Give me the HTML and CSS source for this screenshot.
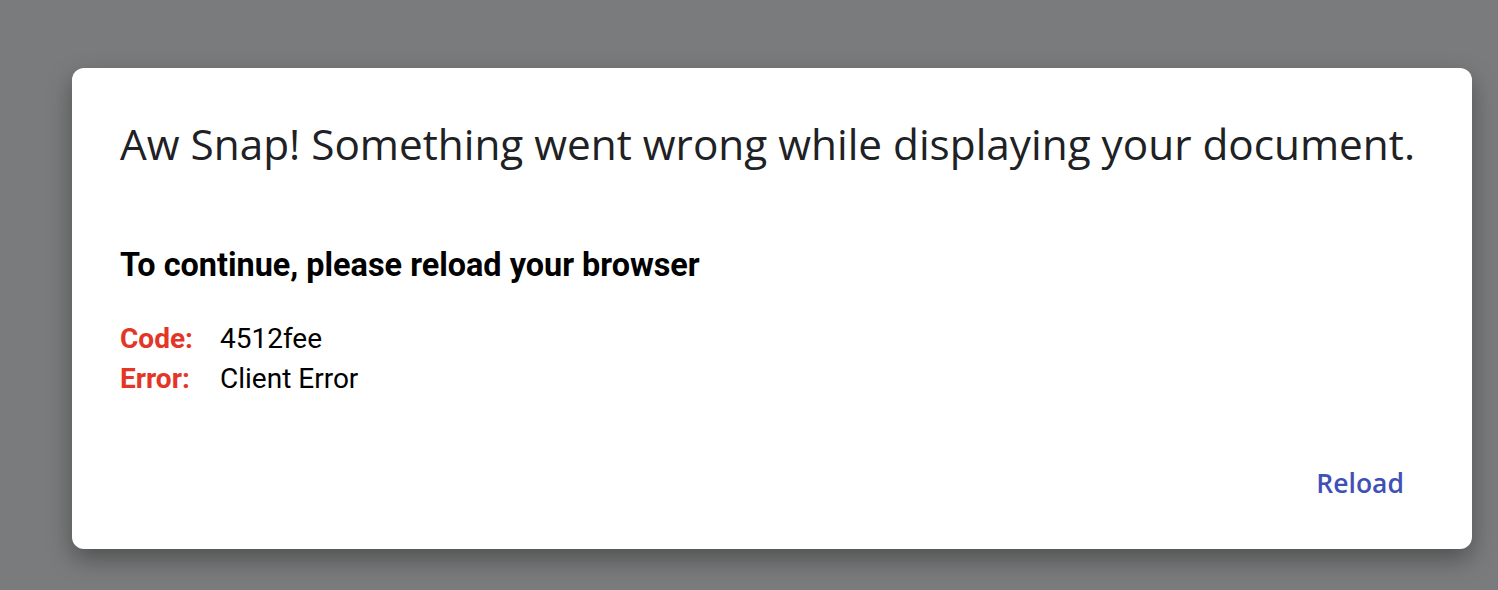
FILE: index.html
```html
<!DOCTYPE html>
<html>
<head>
<meta charset="utf-8">
<link rel="stylesheet" href="styles.css">
</head>
<body>
<div class="overlay">
  <div class="dialog">
    <h1 class="title">Aw Snap! Something went wrong while displaying your document.</h1>
    <h2 class="subtitle">To continue, please reload your browser</h2>
    <div class="details">
      <div class="row"><span class="label">Code:</span><span class="value">4512fee</span></div>
      <div class="row"><span class="label">Error:</span><span class="value">Client Error</span></div>
    </div>
    <div class="actions">
      <button class="reload">Reload</button>
    </div>
  </div>
</div>
</body>
</html>
```
FILE: styles.css
```css
html, body {
  margin: 0;
  padding: 0;
  height: 100%;
}
body {
  background: #7a7b7c;
  font-family: Roboto, "Liberation Sans", sans-serif;
}
.overlay {
  padding: 68px 26px 0 72px;
}
.dialog {
  width: 1400px;
  height: 481px;
  box-sizing: border-box;
  background: #fff;
  border-radius: 12px;
  box-shadow: 0 10px 24px rgba(0, 0, 0, 0.35);
  padding: 0 68px 0 48px;
  display: flex;
  flex-direction: column;
}
.title {
  margin: 50px 0 0 0;
  font-family: "Open Sans", sans-serif;
  font-weight: 400;
  font-size: 42.3px;
  line-height: 52px;
  color: #202124;
  white-space: nowrap;
}
.subtitle {
  margin: 75px 0 0 0;
  font-family: Roboto, sans-serif;
  font-weight: 700;
  font-size: 32.4px;
  line-height: 40px;
  color: #000;
}
.details {
  margin-top: 34px;
  display: flex;
  flex-direction: column;
}
.row {
  display: flex;
  font-size: 28px;
  line-height: 40px;
}
.label {
  width: 100px;
  color: #e33627;
  font-weight: 700;
}
.value {
  color: #000;
}
.actions {
  margin-top: auto;
  margin-bottom: 48px;
  display: flex;
  justify-content: flex-end;
}
.reload {
  border: none;
  background: none;
  padding: 0;
  font-family: "Open Sans", sans-serif;
  font-weight: 600;
  font-size: 26.5px;
  color: #3f51b5;
  cursor: pointer;
}
```
